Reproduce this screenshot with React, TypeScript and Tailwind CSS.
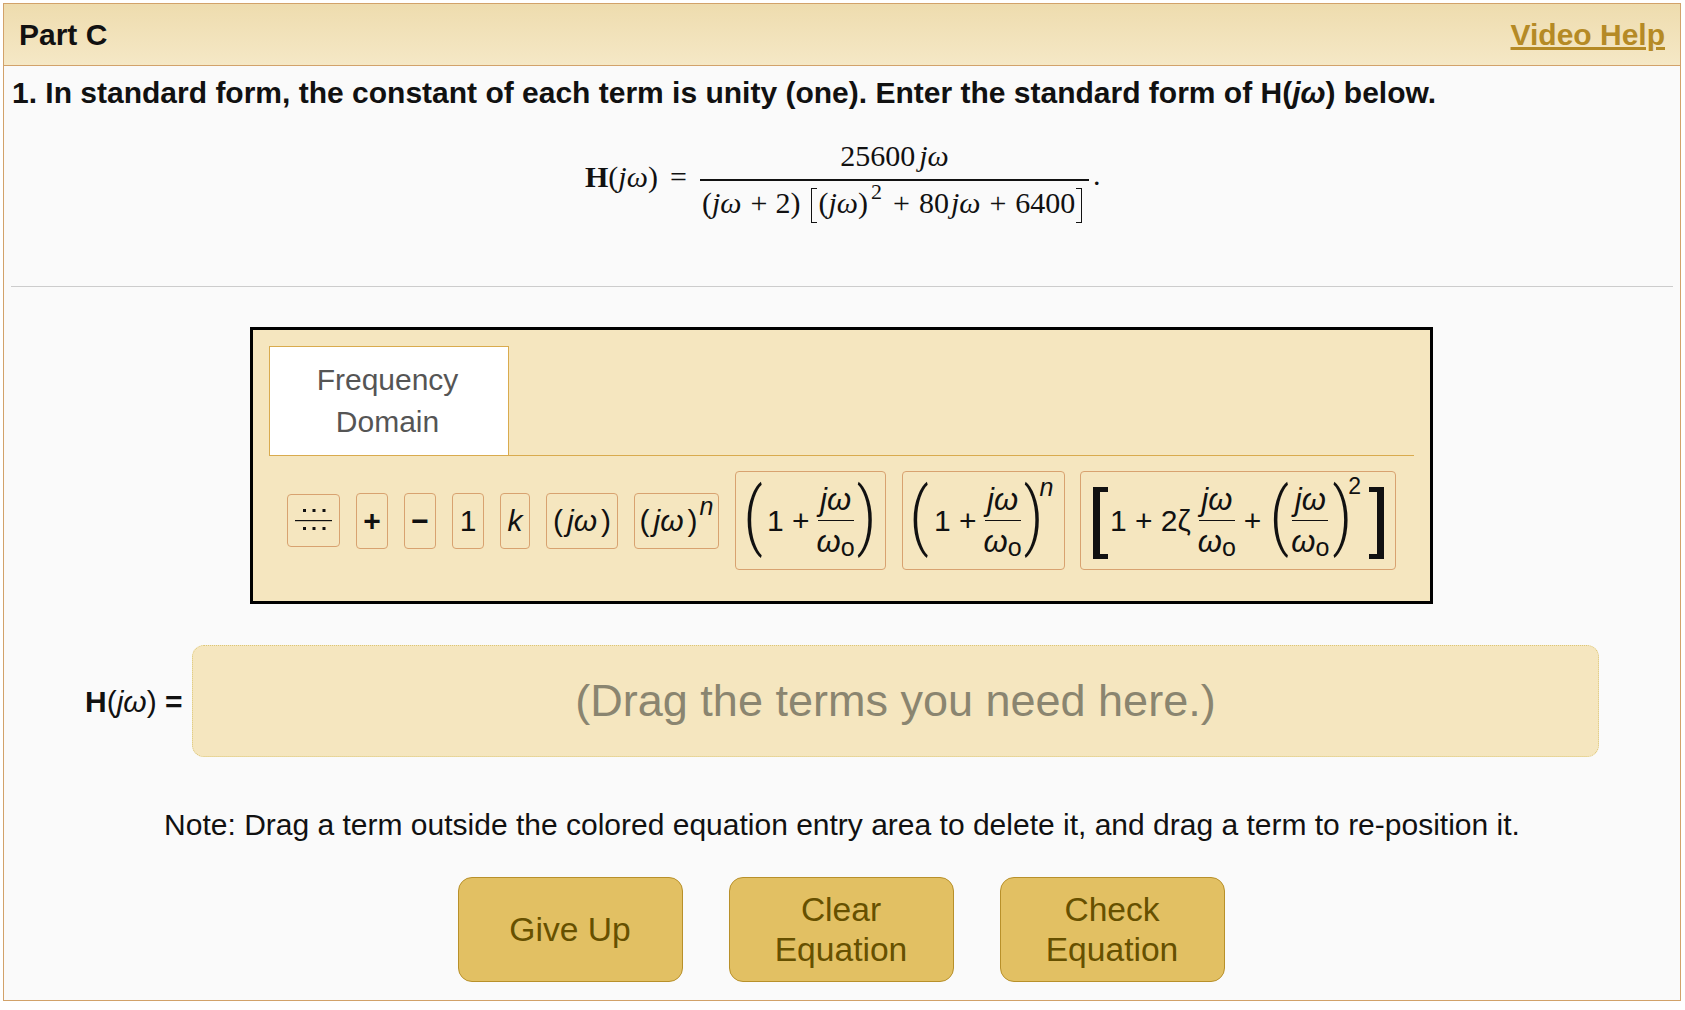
import React from "react";

const sans = "font-['Liberation_Sans',Arial,sans-serif]";
const serif = "font-['Liberation_Serif','Times_New_Roman',serif]";

const Small: React.FC<{ className: string; children: React.ReactNode }> = ({ className, children }) => (
  <div className={`flex h-[56px] items-center justify-center rounded-[4px] border border-[#d8a270] text-[30px] leading-none text-[#111] ${className}`}>
    {children}
  </div>
);

const Large: React.FC<{ className: string; children: React.ReactNode }> = ({ className, children }) => (
  <div className={`flex h-[99px] items-center rounded-[4px] border border-[#d8a270] text-[30px] leading-none whitespace-pre text-[#111] ${className}`}>
    {children}
  </div>
);

const Paren: React.FC<{ className?: string; children: string }> = ({ className = "", children }) => (
  <span className={`mb-[10px] inline-block w-[20px] shrink-0 scale-y-[1.25] text-center font-['Roboto'] text-[60px] leading-none font-light ${className}`}>
    {children}
  </span>
);

const Frac: React.FC<{ className?: string }> = ({ className = "" }) => (
  <span className={`flex w-[36px] shrink-0 flex-col items-center text-[31px] leading-none ${className}`}>
    <span className="flex h-[37px] w-full items-end justify-center border-b border-[#111] pb-[5px] italic">jω</span>
    <span className="flex h-[36px] pt-[5px]">
      <i>ω</i>
      <span className="relative top-[9px] text-[25px]">o</span>
    </span>
  </span>
);

const App: React.FC = () => {
  return (
    <div className={`h-[1010px] w-[1685px] bg-white pt-[3px] pl-[3px] ${sans}`}>
      <div className="flex h-[998px] w-[1678px] flex-col items-stretch border border-[#d2a26a] bg-[#fafafa]">
        <div className="flex h-[62px] shrink-0 items-center justify-between border-b border-[#d2a26a] bg-gradient-to-b from-[#eedcae] to-[#f5e8c6] pr-[15px] pl-[15px]">
          <span className="text-[30px] font-bold text-[#111]">Part C</span>
          <a className="text-[30px] font-bold text-[#b58a25] underline">Video Help</a>
        </div>

        <p className="mt-[7px] ml-[8px] text-[30px] leading-[40px] font-bold text-[#111]">
          1. In standard form, the constant of each term is unity (one). Enter the standard form of H(<i>jω</i>) below.
        </p>

        {/* given equation */}
        <div className={`mt-[22px] flex h-[90px] shrink-0 items-start pl-[581px] text-[30px] leading-none text-[#111] ${serif}`}>
          <span className="flex w-[115px] shrink-0 pt-[27px] whitespace-nowrap">
            <b>H</b>
            <span>
              (<i>jω</i>)
            </span>
            <span className="ml-[12px]">=</span>
          </span>
          <span className="w-[389px] shrink-0">
            <span className="flex h-[46px] justify-center border-b-2 border-[#111] pt-[6px]">
              <span>25600</span>
              <i className="ml-[4px]">jω</i>
            </span>
            <span className="flex h-[44px] items-start pt-[7px] pl-[2px] whitespace-nowrap">
              <span>
                (<i>jω</i>
              </span>
              <span className="ml-[9px]">+</span>
              <span className="ml-[8px]">2)</span>
              <span className="ml-[11px] h-[35px] w-[6px] border-y border-l border-[#111]" />
              <span className="ml-[1px]">
                (<i>jω</i>)
              </span>
              <span className="-mt-[7px] ml-[3px] text-[22px]">2</span>
              <span className="ml-[11px]">+</span>
              <span className="ml-[9px]">80</span>
              <i className="ml-[2px]">jω</i>
              <span className="ml-[9px]">+</span>
              <span className="ml-[9px]">6400</span>
              <span className="ml-[1px] h-[35px] w-[6px] border-y border-r border-[#111]" />
            </span>
          </span>
          <span className="ml-[4px] pt-[25px]">.</span>
        </div>

        <div className="mx-[7px] mt-[61px] h-px shrink-0 bg-[#ccc]" />

        {/* term palette */}
        <div className="mt-[40px] ml-[246px] h-[277px] w-[1183px] shrink-0 border-[3px] border-black bg-[#f5e6bf] px-[16px] pt-[16px]">
          <div className="h-[110px] border-b border-[#d9ab4e]">
            <div className="flex h-[110px] w-[240px] items-center justify-center border border-[#d9ab4e] bg-white pr-[3px] text-center text-[30px] leading-[42px] text-[#555]">
              Frequency
              <br />
              Domain
            </div>
          </div>
          <div className="flex h-[129px] items-center gap-[16px] pl-[18px]">
            <div className="flex h-[53px] w-[53px] items-center justify-center rounded-[4px] border border-[#d8a270]">
              <svg width="37" height="24" viewBox="0 0 37 24" fill="#111">
                <rect x="0" y="11" width="37" height="1.2" />
                <rect x="8" y="0" width="3" height="3" />
                <rect x="17.5" y="0" width="3" height="3" />
                <rect x="27.5" y="0" width="3" height="3" />
                <rect x="8" y="18" width="3" height="3" />
                <rect x="17.5" y="18" width="3" height="3" />
                <rect x="27.5" y="18" width="3" height="3" />
              </svg>
            </div>
            <Small className="w-[32px] font-bold">+</Small>
            <Small className="w-[32px] font-bold">−</Small>
            <Small className="w-[32px]">1</Small>
            <Small className="w-[30px] italic">k</Small>
            <Small className="w-[72px]">
              <span>(</span>
              <i className="mx-[4px]">jω</i>
              <span>)</span>
            </Small>
            <Small className="w-[85px] whitespace-nowrap">
              <span>(</span>
              <i className="mx-[4px]">jω</i>
              <span>)</span>
              <i className="mb-[29px] ml-[2px] text-[25px]">n</i>
            </Small>
            <Large className="w-[151px] pl-[7px]">
              <Paren>(</Paren>
              <span className="ml-[4px]">1 +</span>
              <Frac className="ml-[8px]" />
              <Paren className="ml-[3px]">)</Paren>
            </Large>
            <Large className="w-[163px] pl-[6px]">
              <Paren>(</Paren>
              <span className="ml-[5px]">1 +</span>
              <Frac className="ml-[8px]" />
              <Paren className="ml-[3px]">)</Paren>
              <i className="mb-[67px] -ml-[4px] text-[25px]">n</i>
            </Large>
            <Large className="-ml-[1px] w-[316px] pl-[12px]">
              <span className="mt-[4px] h-[72px] w-[15px] shrink-0 border-y-[5px] border-l-[7px] border-[#111]" />
              <span className="ml-[2px]">1 + 2ζ</span>
              <Frac className="ml-[8px]" />
              <span className="ml-[9px]">+</span>
              <Paren className="ml-[8px]">(</Paren>
              <Frac className="ml-[3px]" />
              <Paren className="ml-[4px]">)</Paren>
              <span className="mb-[68px] -ml-[4px] text-[23px]">2</span>
              <span className="mt-[4px] ml-[8px] h-[72px] w-[15px] shrink-0 border-y-[5px] border-r-[7px] border-[#111]" />
            </Large>
          </div>
        </div>

        {/* drop target */}
        <div className="mt-[41px] flex h-[112px] shrink-0 items-center">
          <span className="ml-[81px] w-[99px] text-[30px] font-bold whitespace-nowrap text-[#111]">
            H<span className="font-normal">(<i>jω</i>)</span> =
          </span>
          <div className="ml-[8px] flex h-[112px] w-[1407px] items-center justify-center rounded-[12px] border border-dotted border-[#dcc676] bg-[#f5e6bf] text-[45px] text-[#8a8570]">
            (Drag the terms you need here.)
          </div>
        </div>

        <p className="mt-[48px] text-center text-[30px] leading-[40px] text-[#111]">
          Note: Drag a term outside the colored equation entry area to delete it, and drag a term to re-position it.
        </p>

        <div className="mt-[32px] flex justify-center gap-[46px] pr-[2px]">
          {["Give Up", "Clear\nEquation", "Check\nEquation"].map((label) => (
            <button
              key={label}
              className="h-[105px] w-[225px] rounded-[14px] border border-[#b8902a] bg-[#e2c063] text-[33.6px] leading-[40px] whitespace-pre-line text-[#665000]"
            >
              {label}
            </button>
          ))}
        </div>
      </div>
    </div>
  );
};

export default App;
